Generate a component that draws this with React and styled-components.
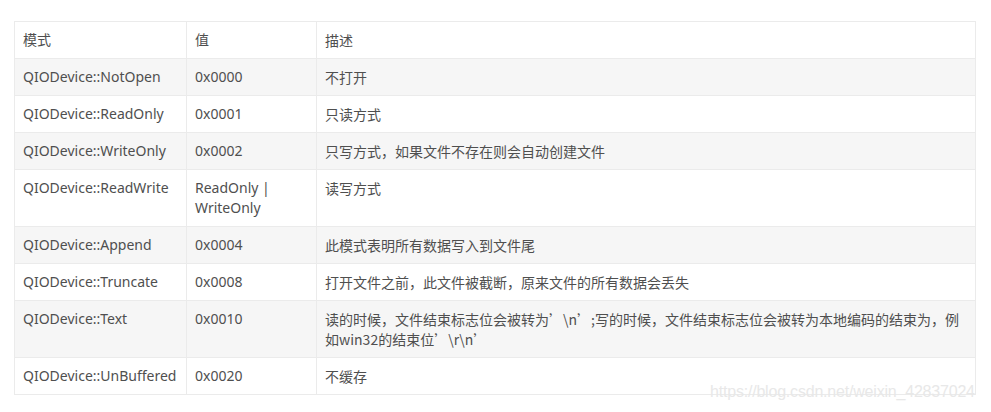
import React from 'react'
import styled, { createGlobalStyle } from 'styled-components'

const GlobalStyle = createGlobalStyle`
  html, body {
    margin: 0;
    padding: 0;
    background: #fff;
  }
`

const Page = styled.div`
  position: relative;
  width: 991px;
  height: 412px;
  padding: 21px 0 0 14px;
  box-sizing: border-box;
  font-family: "Noto Sans", "Noto Sans CJK SC", sans-serif;
  font-size: 14px;
  color: #4f4f4f;
`

const Table = styled.table`
  width: 962px;
  border-collapse: collapse;
  table-layout: fixed;
`

const Row = styled.tr`
  background: ${p => (p.$striped ? '#f6f6f6' : '#fff')};
`

const Cell = styled.td`
  border: 1px solid #ebebeb;
  padding: 8px 8px;
  line-height: 20px;
  vertical-align: top;
  text-align: left;
  word-break: break-word;
  font-family: ${p => (p.$cjk ? '"Noto Sans CJK SC", "Noto Sans", sans-serif' : 'inherit')};
`

const HeadCell = styled(Cell).attrs({ as: 'th' })`
  font-weight: normal;
`

const Watermark = styled.div`
  position: absolute;
  left: 710px;
  top: 383px;
  font-family: "Liberation Sans", Arial, sans-serif;
  font-size: 16px;
  color: #e8e8e8;
  letter-spacing: -0.2px;
  white-space: nowrap;
`

const rows = [
  ['QIODevice::NotOpen', '0x0000', '不打开'],
  ['QIODevice::ReadOnly', '0x0001', '只读方式'],
  ['QIODevice::WriteOnly', '0x0002', '只写方式，如果文件不存在则会自动创建文件'],
  ['QIODevice::ReadWrite', 'ReadOnly | WriteOnly', '读写方式'],
  ['QIODevice::Append', '0x0004', '此模式表明所有数据写入到文件尾'],
  ['QIODevice::Truncate', '0x0008', '打开文件之前，此文件被截断，原来文件的所有数据会丢失'],
  [
    'QIODevice::Text',
    '0x0010',
    '读的时候，文件结束标志位会被转为’\\n’;写的时候，文件结束标志位会被转为本地编码的结束为，例如win32的结束位’\\r\\n’'
  ],
  ['QIODevice::UnBuffered', '0x0020', '不缓存']
]

export default function App() {
  return (
    <Page>
      <GlobalStyle />
      <Table>
        <colgroup>
          <col style={{ width: 172 }} />
          <col style={{ width: 130 }} />
          <col />
        </colgroup>
        <thead>
          <Row>
            <HeadCell>模式</HeadCell>
            <HeadCell>值</HeadCell>
            <HeadCell $cjk>描述</HeadCell>
          </Row>
        </thead>
        <tbody>
          {rows.map((r, i) => (
            <Row key={r[0]} $striped={i % 2 === 0}>
              <Cell>{r[0]}</Cell>
              <Cell>{r[1]}</Cell>
              <Cell $cjk>{r[2]}</Cell>
            </Row>
          ))}
        </tbody>
      </Table>
      <Watermark>https://blog.csdn.net/weixin_42837024</Watermark>
    </Page>
  )
}
